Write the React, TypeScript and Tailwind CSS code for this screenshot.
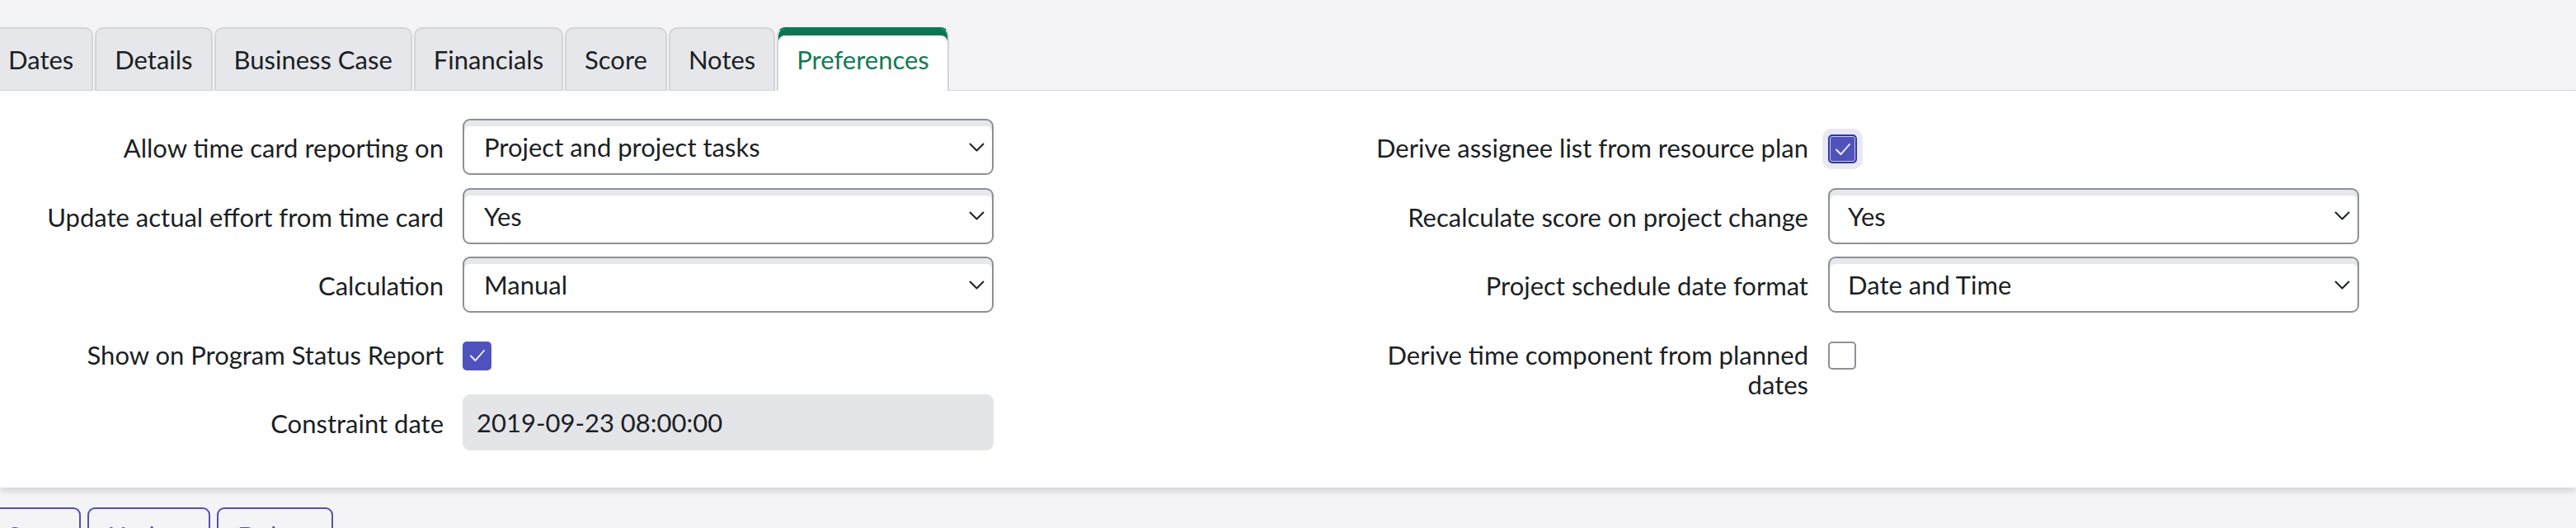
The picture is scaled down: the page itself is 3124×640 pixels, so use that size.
import React from "react";

const tabs = ["Dates", "Details", "Business Case", "Financials", "Score", "Notes"];

function Chevron() {
  return (
    <svg width="19" height="11" viewBox="0 0 19 11" fill="none" className="shrink-0">
      <polyline points="1,1 9.5,9.5 18,1" stroke="#1f2328" strokeWidth="2" strokeLinejoin="round" />
    </svg>
  );
}

function CheckMark() {
  return (
    <svg width="22" height="22" viewBox="0 0 22 22" fill="none">
      <polyline points="3,11.5 8.5,17 19,5" stroke="#ffffff" strokeWidth="1.8" strokeLinecap="round" strokeLinejoin="round" />
    </svg>
  );
}

function SelectBox({ value, pad = "pl-[24px]" }: { value: string; pad?: string }) {
  return (
    <div
      className={`h-[68px] w-[644px] flex items-center justify-between ${pad} pr-[9px] bg-white border-2 border-[#8d9096] rounded-[9px] shadow-[inset_0_7px_0_0_#e7e8eb]`}
    >
      <span className="text-[31px] leading-[36px] text-[#1c1f24]">{value}</span>
      <Chevron />
    </div>
  );
}

function Checkbox({ checked, focused }: { checked?: boolean; focused?: boolean }) {
  if (!checked) {
    return <div className="w-[34px] h-[34px] rounded-[5px] border-2 border-[#8d9096] bg-white" />;
  }
  return (
    <div
      className={`w-[35px] h-[35px] rounded-[5px] flex items-center justify-center bg-[#4f52bd] ${
        focused ? "border-2 border-[#34379a] shadow-[0_0_0_7px_#e8e8f6,inset_0_0_0_1px_#c9cbf0]" : ""
      }`}
    >
      <CheckMark />
    </div>
  );
}

function Label({ children }: { children: React.ReactNode }) {
  return <div className="text-right text-[31px] leading-[36px] pt-[17px] text-[#1c1f24]">{children}</div>;
}

function LeftRow({ label, children }: { label: string; children: React.ReactNode }) {
  return (
    <div className="grid grid-cols-[538px_644px] gap-x-[23px] items-start">
      <Label>{label}</Label>
      {children}
    </div>
  );
}

function RightRow({ label, children }: { label: string; children: React.ReactNode }) {
  return (
    <div className="grid grid-cols-[560px_644px] gap-x-[24px] items-start">
      <Label>{label}</Label>
      {children}
    </div>
  );
}

function CheckCell({ children }: { children: React.ReactNode }) {
  return <div className="h-[68px] flex items-center pt-[5px]">{children}</div>;
}

export default function App() {
  return (
    <div className="w-[3124px] h-[640px] overflow-hidden bg-[#f4f4f6] font-['Lato','Open_Sans',sans-serif] text-[#1c1f24]">
      {/* Tab strip */}
      <div className="pt-[33px] flex items-end -ml-[14px]">
        {tabs.map((t) => (
          <div
            key={t}
            className="h-[77px] mr-[2px] px-[22px] flex items-center text-[31px] bg-[#e6e7eb] border-2 border-b border-[#d4d5d9] rounded-t-[10px]"
          >
            {t}
          </div>
        ))}
        <div className="h-[77px] px-[22px] flex items-center text-[31px] text-[#137a57] bg-white border-x-2 border-t-2 border-[#d4d5d9] border-t-[#0b7654] rounded-t-[10px] shadow-[inset_0_8px_0_0_#0b7654]">
          Preferences
        </div>
        <div className="flex-1 h-[77px] border-b border-[#d4d5d9]" />
      </div>

      {/* Form panel */}
      <div className="bg-white pt-[34px] pb-[45px] flex shadow-[0_4px_8px_rgba(0,0,0,0.14)]">
        <div className="w-[1563px] shrink-0 flex flex-col gap-y-[15.5px]">
          <LeftRow label="Allow time card reporting on">
            <SelectBox value="Project and project tasks" />
          </LeftRow>
          <LeftRow label="Update actual effort from time card">
            <SelectBox value="Yes" />
          </LeftRow>
          <LeftRow label="Calculation">
            <SelectBox value="Manual" />
          </LeftRow>
          <LeftRow label="Show on Program Status Report">
            <CheckCell>
              <Checkbox checked />
            </CheckCell>
          </LeftRow>
          <LeftRow label="Constraint date">
            <div className="h-[68px] w-[644px] flex items-center pl-[17px] bg-[#e4e5e9] rounded-[9px] text-[31px]">
              2019-09-23 08:00:00
            </div>
          </LeftRow>
        </div>
        <div className="flex-1 pl-[70px] flex flex-col gap-y-[15.5px]">
          <RightRow label="Derive assignee list from resource plan">
            <CheckCell>
              <Checkbox checked focused />
            </CheckCell>
          </RightRow>
          <RightRow label="Recalculate score on project change">
            <SelectBox value="Yes" pad="pl-[22px]" />
          </RightRow>
          <RightRow label="Project schedule date format">
            <SelectBox value="Date and Time" pad="pl-[22px]" />
          </RightRow>
          <RightRow label="Derive time component from planned dates">
            <CheckCell>
              <Checkbox />
            </CheckCell>
          </RightRow>
        </div>
      </div>

      {/* Form buttons */}
      <div className="mt-[24px] -ml-[16px] flex gap-x-[8px]">
        {["Save", "Update", "Delete"].map((b) => (
          <div
            key={b}
            className="h-[68px] px-[23px] flex items-center text-[31px] text-[#4f52b2] border-2 border-[#4f52b2] rounded-[9px]"
          >
            {b}
          </div>
        ))}
      </div>
    </div>
  );
}
